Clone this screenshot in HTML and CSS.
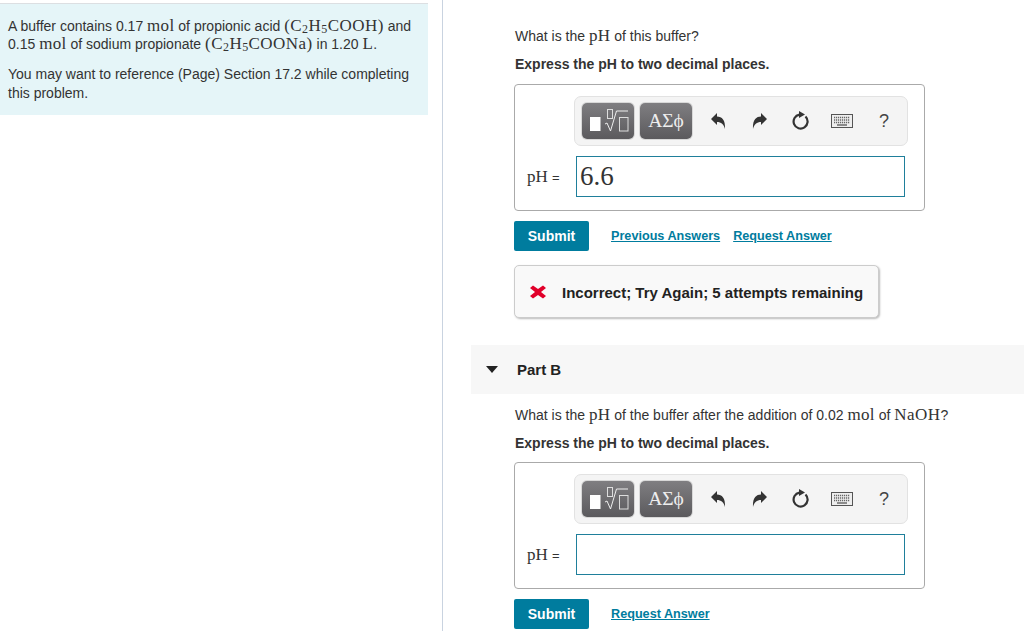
FILE: index.html
```html
<!DOCTYPE html>
<html lang="en">
<head>
    <meta charset="UTF-8">
    <meta name="viewport" content="width=device-width, initial-scale=1.0">
    <title>Buffer problem</title>
    <link rel="stylesheet" href="styles.css">
</head>
<body>
    <svg class="icon-defs" width="0" height="0">
        <symbol id="templates" viewBox="0 0 52 36">
            <rect x="8" y="14" width="10.5" height="14" fill="#fff"/>
            <rect x="25.5" y="6.5" width="5" height="9" fill="none" stroke="#ddd" stroke-width="1"/>
            <path d="M23 21 l2 -1 l3.5 8 l6 -20 h11.5" fill="none" stroke="#eee" stroke-width="1"/>
            <rect x="37.5" y="14.5" width="8.5" height="13.5" fill="none" stroke="#ddd" stroke-width="1"/>
        </symbol>
        <symbol id="undo" viewBox="0 0 16 18">
            <path d="M1 7 L7 1 V4.5 C12 4.5 15.5 8 15 17 C14 12.5 11 10 7 10 V13 Z" fill="#333"/>
        </symbol>
        <symbol id="reset" viewBox="0 0 18 20">
            <path d="M14.5 5.5 A7 7 0 1 1 8.5 3.6" fill="none" stroke="#333" stroke-width="2.2"/>
            <path d="M8 0 L14 3.5 L8 7 Z" fill="#333"/>
        </symbol>
        <symbol id="keyboard" viewBox="0 0 22 14">
            <rect x="0.5" y="0.5" width="21" height="13" fill="#eee" stroke="#555"/>
            <path d="M3 3.5 H19 M3 6 H19 M3 8.5 H19" stroke="#666" stroke-width="1.3" stroke-dasharray="1.2 0.8"/>
            <path d="M6 11 H16" stroke="#555" stroke-width="1.3"/>
        </symbol>
    </svg>

    <div class="page">
        <aside class="sidebar">
            <div class="intro">
                <p>A buffer contains 0.17 <span class="math">mol</span> of propionic acid <span class="math formula">(C<sub>2</sub>H<sub>5</sub>COOH)</span> and 0.15 <span class="math">mol</span> of sodium propionate <span class="math formula">(C<sub>2</sub>H<sub>5</sub>COONa)</span> in 1.20 <span class="math">L</span>.</p>
                <p>You may want to reference (Page) Section 17.2 while completing this problem.</p>
            </div>
        </aside>

        <main class="main">
            <section class="part part-a">
                <p class="question">What is the <span class="math">pH</span> of this buffer?</p>
                <p class="instruction">Express the pH to two decimal places.</p>
                <div class="answer-box">
                    <div class="toolbar">
                        <button type="button" class="tool-btn"><svg class="tool-templates"><use href="#templates"/></svg></button>
                        <button type="button" class="tool-btn tool-greek">ΑΣϕ</button>
                        <div class="tool-icons">
                            <svg class="icon-arrow"><use href="#undo"/></svg>
                            <svg class="icon-arrow flip"><use href="#undo"/></svg>
                            <svg class="icon-reset"><use href="#reset"/></svg>
                            <svg class="icon-keyboard"><use href="#keyboard"/></svg>
                            <span class="icon-help">?</span>
                        </div>
                    </div>
                    <div class="answer-row">
                        <span class="answer-label">pH <span class="equals">=</span></span>
                        <div class="answer-input">6.6</div>
                    </div>
                </div>
                <div class="actions">
                    <button type="button" class="submit">Submit</button>
                    <a href="#" class="action-link first">Previous Answers</a>
                    <a href="#" class="action-link">Request Answer</a>
                </div>
                <div class="feedback">
                    <svg class="feedback-x" viewBox="0 0 16 14"><path d="M3 0.5 L8 4 L13 0.5 L16 3 L11 7 L16 11 L13 13.5 L8 10 L3 13.5 L0 11 L5 7 L0 3 Z" fill="#e1002a"/></svg>
                    <span>Incorrect; Try Again; 5 attempts remaining</span>
                </div>
            </section>

            <div class="part-header">
                <span class="caret"></span>
                <span class="part-title">Part B</span>
            </div>

            <section class="part part-b">
                <p class="question">What is the <span class="math">pH</span> of the buffer after the addition of 0.02 <span class="math">mol</span> of <span class="math formula">NaOH</span>?</p>
                <p class="instruction">Express the pH to two decimal places.</p>
                <div class="answer-box">
                    <div class="toolbar">
                        <button type="button" class="tool-btn"><svg class="tool-templates"><use href="#templates"/></svg></button>
                        <button type="button" class="tool-btn tool-greek">ΑΣϕ</button>
                        <div class="tool-icons">
                            <svg class="icon-arrow"><use href="#undo"/></svg>
                            <svg class="icon-arrow flip"><use href="#undo"/></svg>
                            <svg class="icon-reset"><use href="#reset"/></svg>
                            <svg class="icon-keyboard"><use href="#keyboard"/></svg>
                            <span class="icon-help">?</span>
                        </div>
                    </div>
                    <div class="answer-row">
                        <span class="answer-label">pH <span class="equals">=</span></span>
                        <div class="answer-input"></div>
                    </div>
                </div>
                <div class="actions">
                    <button type="button" class="submit">Submit</button>
                    <a href="#" class="action-link first">Request Answer</a>
                </div>
            </section>
        </main>
    </div>
</body>
</html>
```

FILE: styles.css
```css
/* base */
html, body {
    margin: 0;
    height: 631px;
    overflow: hidden;
}

body {
    font-family: "Liberation Sans", Arial, sans-serif;
    font-size: 14px;
    color: #333;
    background-color: #fff;
}

p {
    margin: 0;
}

.icon-defs {
    position: absolute;
}

.page {
    display: flex;
    height: 631px;
}

.math {
    font-family: "Liberation Serif", "Times New Roman", serif;
    font-size: 17px;
    letter-spacing: 0.3px;
    line-height: 1;
}

.math.formula {
    letter-spacing: 0.45px;
}

.math sub {
    font-size: 12px;
    line-height: 0;
    vertical-align: -2px;
}

/* left column */
.sidebar {
    flex: none;
    width: 443px;
    height: 631px;
    box-sizing: border-box;
    padding-top: 3px;
    border-right: 1px solid #c9d3e0;
}

.intro {
    width: 428px;
    height: 112px;
    box-sizing: border-box;
    padding: 13px 8px 0;
    background-color: #e5f5f8;
    border-top: 1px solid #dcdfe2;
    line-height: 18.4px;
}

.intro p + p {
    margin-top: 11.5px;
}

/* right column */
.main {
    flex: 1;
    min-width: 0;
}

.part {
    padding-left: 72px;
}

.part-a {
    padding-top: 27px;
}

.question {
    line-height: 18px;
}

.instruction {
    font-weight: bold;
    line-height: 18px;
    margin-top: 10px;
}

.answer-box {
    box-sizing: border-box;
    width: 411px;
    height: 127px;
    margin-top: 11px;
    margin-left: -1px;
    padding: 11px 16px 0 11px;
    border: 1px solid #aaa;
    border-radius: 4px;
}

.part-b .answer-box {
    margin-top: 10px;
}

.toolbar {
    display: flex;
    align-items: center;
    box-sizing: border-box;
    width: 334px;
    height: 50px;
    margin-left: 48px;
    padding-left: 7px;
    background-color: #f4f4f4;
    border: 1px solid #e2e2e2;
    border-radius: 7px;
}

.tool-btn {
    display: flex;
    align-items: center;
    justify-content: center;
    box-sizing: border-box;
    width: 52px;
    height: 36px;
    padding: 0;
    margin-right: 6px;
    border: none;
    border-radius: 5px;
    background: linear-gradient(#7f7e81, #5b5a5d);
    box-shadow: 0 0 0 1px #d8d8d8;
    color: #eee;
}

.tool-templates {
    width: 52px;
    height: 36px;
}

.tool-greek {
    font-family: "Liberation Serif", serif;
    font-size: 19.5px;
}

.tool-icons {
    display: flex;
    align-items: center;
    margin-left: 12px;
    color: #333;
}

.icon-arrow {
    width: 16px;
    height: 18px;
    margin-right: 26px;
}

.icon-arrow.flip {
    transform: scaleX(-1);
    margin-right: 23px;
}

.icon-reset {
    width: 18px;
    height: 20px;
    margin-right: 22px;
}

.icon-keyboard {
    width: 22px;
    height: 14px;
    margin-right: 26px;
}

.icon-help {
    font-size: 18px;
    color: #444;
}

.answer-row {
    display: flex;
    align-items: center;
    margin-top: 10px;
}

.answer-label {
    width: 49px;
    flex: none;
    margin-left: 1px;
    font-family: "Liberation Serif", serif;
    font-size: 17px;
}

.equals {
    font-family: "Liberation Sans", Arial, sans-serif;
    font-size: 13px;
}

.answer-input {
    box-sizing: border-box;
    width: 329px;
    height: 41px;
    padding-left: 3px;
    border: 1px solid #1f7f9b;
    font-family: "Liberation Serif", serif;
    font-size: 27px;
    line-height: 39px;
}

.actions {
    display: flex;
    align-items: center;
    margin-top: 10px;
    margin-left: -1px;
}

.submit {
    width: 75px;
    height: 30px;
    padding: 0;
    border: none;
    border-radius: 2px;
    background-color: #007c9e;
    color: #fff;
    font-family: inherit;
    font-size: 14px;
    font-weight: bold;
}

.action-link {
    margin-left: 13px;
    color: #007c9e;
    font-size: 12.65px;
    font-weight: bold;
}

.action-link.first {
    margin-left: 22px;
}

.feedback {
    display: flex;
    align-items: center;
    box-sizing: border-box;
    width: 365px;
    height: 53px;
    margin-top: 14px;
    margin-left: -1px;
    padding: 1px 0 0 15px;
    background-color: #f9f9f9;
    border: 1px solid #ccc;
    border-radius: 5px;
    box-shadow: 1px 1px 2px #bbb;
    font-size: 15px;
    font-weight: bold;
    color: #222;
}

.feedback-x {
    width: 16px;
    height: 14px;
    margin-right: 16px;
}

.part-header {
    display: flex;
    align-items: center;
    height: 49px;
    margin-top: 27px;
    margin-left: 28px;
    background-color: #f7f7f7;
}

.caret {
    width: 0;
    height: 0;
    margin-left: 15px;
    border-left: 6px solid transparent;
    border-right: 6px solid transparent;
    border-top: 7px solid #222;
}

.part-title {
    margin-left: 19px;
    font-size: 15px;
    font-weight: bold;
    color: #222;
}

.part-b {
    padding-top: 12px;
}
```
